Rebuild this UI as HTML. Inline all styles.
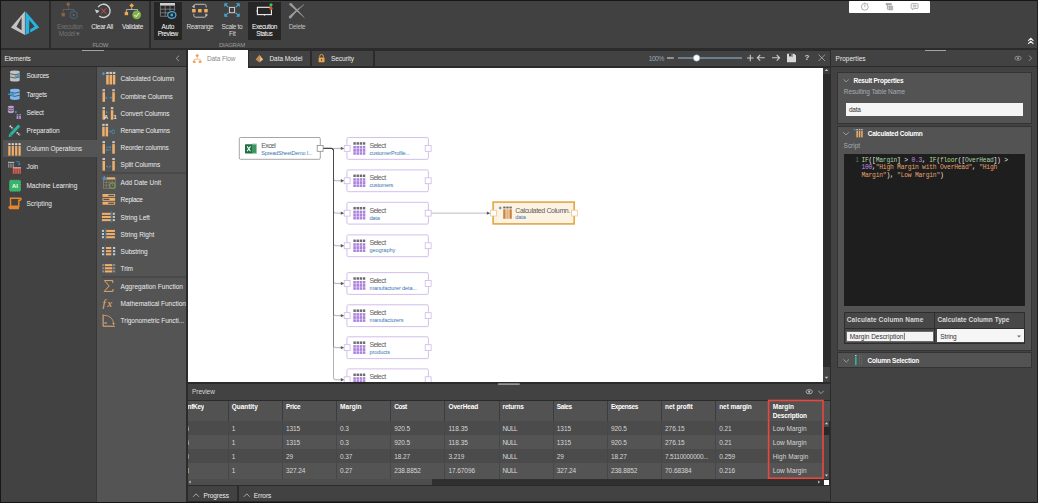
<!DOCTYPE html><html><head><meta charset="utf-8"><title>Data Flow</title><style>
html,body{margin:0;padding:0;}body{width:1038px;height:503px;background:#2b2b2b;position:relative;overflow:hidden;font-family:"Liberation Sans",sans-serif;}
#app div{position:absolute;box-sizing:border-box;}#app span{position:absolute;white-space:pre;line-height:10px;height:10px;}#ov{position:absolute;left:0;top:0;pointer-events:none;}
</style></head><body><div id="app" style="position:absolute;left:0;top:0;width:1038px;height:503px;overflow:hidden">
<div style="left:0px;top:0px;width:1038px;height:1px;background:#161616;"></div>
<div style="left:0px;top:0px;width:0.9px;height:503px;background:#171717;"></div>
<div style="left:0px;top:501.7px;width:1038px;height:1.3px;background:#151515;"></div>
<div style="left:1px;top:1px;width:48px;height:47px;background:#414141;"></div>
<div style="left:51px;top:1px;width:98px;height:47px;background:#414141;"></div>
<div style="left:151px;top:1px;width:887px;height:47px;background:#414141;"></div>
<div style="left:153.5px;top:1.5px;width:28px;height:38px;background:#262626;"></div>
<div style="left:248px;top:1.5px;width:33px;height:38px;background:#262626;"></div>
<div style="left:849px;top:0.8px;width:81px;height:12.3px;background:#ffffff;border-radius:0.8px;"></div>
<div style="left:1px;top:50px;width:185px;height:16.3px;background:#424242;"></div>
<div style="left:188px;top:50px;width:60px;height:18px;background:#ffffff;"></div>
<div style="left:249px;top:50.5px;width:61px;height:15.7px;background:#424242;"></div>
<div style="left:312px;top:50.5px;width:61px;height:15.7px;background:#424242;"></div>
<div style="left:374.5px;top:50.5px;width:455px;height:15.7px;background:#424242;"></div>
<div style="left:831.3px;top:50px;width:207px;height:16.3px;background:#424242;"></div>
<div style="left:82px;top:50px;width:22px;height:1px;background:#a4a4a4;"></div>
<div style="left:924.5px;top:50px;width:21px;height:1px;background:#a4a4a4;"></div>
<div style="left:1px;top:67.3px;width:95.5px;height:434.5px;background:#424242;"></div>
<div style="left:97px;top:67.3px;width:89.2px;height:434.5px;background:#545454;"></div>
<div style="left:96.2px;top:67.3px;width:0.9px;height:434.5px;background:#383838;"></div>
<div style="left:3px;top:140.3px;width:95px;height:16.7px;background:#545454;"></div>
<div style="left:102.2px;top:172.1px;width:84px;height:1.5px;background:#494949;"></div>
<div style="left:102.2px;top:276px;width:84px;height:1.5px;background:#494949;"></div>
<div style="left:188px;top:68px;width:635px;height:314px;background:#ffffff;"></div>
<div style="left:823px;top:68px;width:6.5px;height:314px;background:#2c2c2c;"></div>
<div style="left:823px;top:68px;width:6.5px;height:6px;background:#3d3d3d;"></div>
<div style="left:823px;top:367.2px;width:6.5px;height:14.8px;background:#444444;"></div>
<div style="left:188px;top:383.5px;width:641.5px;height:16.5px;background:#424242;"></div>
<div style="left:188px;top:401px;width:641.5px;height:20px;background:#525252;"></div>
<div style="left:188px;top:421px;width:635.6px;height:14px;background:#4b4b4b;"></div>
<div style="left:188px;top:435px;width:635.6px;height:14px;background:#545454;"></div>
<div style="left:188px;top:449px;width:635.6px;height:14px;background:#4b4b4b;"></div>
<div style="left:188px;top:463px;width:635.6px;height:16px;background:#545454;"></div>
<div style="left:823.6px;top:421px;width:5.9px;height:58px;background:#474747;"></div>
<div style="left:823.6px;top:426.8px;width:5.9px;height:8.2px;background:#282828;"></div>
<div style="left:188px;top:479px;width:244px;height:5.8px;background:#4d4d4d;"></div>
<div style="left:432px;top:479px;width:391.6px;height:5.8px;background:#303030;"></div>
<div style="left:823.8px;top:480px;width:5.5px;height:5px;background:#ffffff;"></div>
<div style="left:188px;top:486.2px;width:48.5px;height:15.2px;background:#424242;"></div>
<div style="left:238.5px;top:486.2px;width:591px;height:15.2px;background:#424242;"></div>
<div style="left:227.7px;top:401px;width:1px;height:20px;background:#3c3c3c;"></div>
<div style="left:227.7px;top:421px;width:1px;height:58px;background:#474747;"></div>
<div style="left:281.8px;top:401px;width:1px;height:20px;background:#3c3c3c;"></div>
<div style="left:281.8px;top:421px;width:1px;height:58px;background:#474747;"></div>
<div style="left:336.0px;top:401px;width:1px;height:20px;background:#3c3c3c;"></div>
<div style="left:336.0px;top:421px;width:1px;height:58px;background:#474747;"></div>
<div style="left:390.2px;top:401px;width:1px;height:20px;background:#3c3c3c;"></div>
<div style="left:390.2px;top:421px;width:1px;height:58px;background:#474747;"></div>
<div style="left:444.4px;top:401px;width:1px;height:20px;background:#3c3c3c;"></div>
<div style="left:444.4px;top:421px;width:1px;height:58px;background:#474747;"></div>
<div style="left:498.5px;top:401px;width:1px;height:20px;background:#3c3c3c;"></div>
<div style="left:498.5px;top:421px;width:1px;height:58px;background:#474747;"></div>
<div style="left:552.7px;top:401px;width:1px;height:20px;background:#3c3c3c;"></div>
<div style="left:552.7px;top:421px;width:1px;height:58px;background:#474747;"></div>
<div style="left:606.8px;top:401px;width:1px;height:20px;background:#3c3c3c;"></div>
<div style="left:606.8px;top:421px;width:1px;height:58px;background:#474747;"></div>
<div style="left:661.0px;top:401px;width:1px;height:20px;background:#3c3c3c;"></div>
<div style="left:661.0px;top:421px;width:1px;height:58px;background:#474747;"></div>
<div style="left:715.1px;top:401px;width:1px;height:20px;background:#3c3c3c;"></div>
<div style="left:715.1px;top:421px;width:1px;height:58px;background:#474747;"></div>
<div style="left:831.3px;top:67.3px;width:207px;height:434.5px;background:#424242;"></div>
<div style="left:837.4px;top:72.2px;width:194.9px;height:52.1px;background:#343434;"></div>
<div style="left:838.4px;top:73.2px;width:192.9px;height:50.0px;background:#535353;"></div>
<div style="left:837.4px;top:126px;width:194.9px;height:225.1px;background:#343434;"></div>
<div style="left:838.4px;top:127px;width:192.9px;height:223px;background:#535353;"></div>
<div style="left:837.4px;top:352.2px;width:194.9px;height:16.200000000000024px;background:#343434;"></div>
<div style="left:838.4px;top:353.2px;width:192.9px;height:14.100000000000023px;background:#535353;"></div>
<div style="left:1037.2px;top:0px;width:0.8px;height:503px;background:#202020;"></div>
<div style="left:845.8px;top:102.6px;width:177.6px;height:13.2px;background:#f5f5f5;"></div>
<div style="left:844px;top:154.2px;width:181.3px;height:151.4px;background:#1e1e1e;"></div>
<div style="left:844.2px;top:312.2px;width:180.7px;height:31.4px;background:#2e2e2e;"></div>
<div style="left:845.2px;top:313.2px;width:88.8px;height:14.6px;background:#474747;"></div>
<div style="left:935px;top:313.2px;width:88.9px;height:14.6px;background:#474747;"></div>
<div style="left:845.2px;top:328.8px;width:88.8px;height:13.8px;background:#474747;"></div>
<div style="left:935px;top:328.8px;width:88.9px;height:13.8px;background:#474747;"></div>
<div style="left:845.6px;top:331.2px;width:88.4px;height:11.2px;background:#f4f4f4;border:1px solid #6a6a6a;"></div>
<div style="left:937.2px;top:329.2px;width:87.3px;height:13px;background:#f6f6f6;"></div>
<svg id="ov" width="1038" height="503" viewBox="0 0 1038 503">
<defs><clipPath id="cv"><rect x="188" y="68" width="635" height="314"/></clipPath></defs>
<g clip-path="url(#cv)">
<path d="M323.2,148.4 H341.5" fill="none" stroke="#484848" stroke-opacity="0.42" stroke-width="1"/>
<path d="M340.8,146.70000000000002 L344.3,148.4 L340.8,150.1 Z" fill="#5a5a5a"/>
<path d="M323.2,148.4 H331.3 Q333.5,148.4 333.5,150.6 V178.55 Q333.5,180.75 335.7,180.75 H341.5" fill="none" stroke="#484848" stroke-opacity="0.42" stroke-width="1"/>
<path d="M340.8,179.05 L344.3,180.75 L340.8,182.45 Z" fill="#5a5a5a"/>
<path d="M323.2,148.4 H331.3 Q333.5,148.4 333.5,150.6 V210.95000000000002 Q333.5,213.15 335.7,213.15 H341.5" fill="none" stroke="#484848" stroke-opacity="0.42" stroke-width="1"/>
<path d="M340.8,211.45000000000002 L344.3,213.15 L340.8,214.85 Z" fill="#5a5a5a"/>
<path d="M323.2,148.4 H331.3 Q333.5,148.4 333.5,150.6 V243.55 Q333.5,245.75 335.7,245.75 H341.5" fill="none" stroke="#484848" stroke-opacity="0.42" stroke-width="1"/>
<path d="M340.8,244.05 L344.3,245.75 L340.8,247.45 Z" fill="#5a5a5a"/>
<path d="M323.2,148.4 H331.3 Q333.5,148.4 333.5,150.6 V281.25 Q333.5,283.45 335.7,283.45 H341.5" fill="none" stroke="#484848" stroke-opacity="0.42" stroke-width="1"/>
<path d="M340.8,281.75 L344.3,283.45 L340.8,285.15 Z" fill="#5a5a5a"/>
<path d="M323.2,148.4 H331.3 Q333.5,148.4 333.5,150.6 V313.45 Q333.5,315.65 335.7,315.65 H341.5" fill="none" stroke="#484848" stroke-opacity="0.42" stroke-width="1"/>
<path d="M340.8,313.95 L344.3,315.65 L340.8,317.34999999999997 Z" fill="#5a5a5a"/>
<path d="M323.2,148.4 H331.3 Q333.5,148.4 333.5,150.6 V345.45 Q333.5,347.65 335.7,347.65 H341.5" fill="none" stroke="#484848" stroke-opacity="0.42" stroke-width="1"/>
<path d="M340.8,345.95 L344.3,347.65 L340.8,349.34999999999997 Z" fill="#5a5a5a"/>
<path d="M323.2,148.4 H331.3 Q333.5,148.4 333.5,150.6 V377.55 Q333.5,379.75 335.7,379.75 H341.5" fill="none" stroke="#484848" stroke-opacity="0.42" stroke-width="1"/>
<path d="M340.8,378.05 L344.3,379.75 L340.8,381.45 Z" fill="#5a5a5a"/>
<path d="M431.3,213.15 H487.5" fill="none" stroke="#bcbcbc" stroke-width="1"/>
<path d="M486.8,211.45000000000002 L490.4,213.15 L486.8,214.85 Z" fill="#5a5a5a"/>
<rect x="239.3" y="137.5" width="81" height="21.8" rx="1.3" fill="#fff" stroke="#9c9c9c" stroke-width="0.9"/>
<rect x="317.2" y="145.4" width="5.9" height="5.9" fill="#fff" stroke="#8a8a8a" stroke-width="0.8"/>
<rect x="251.5" y="143.6" width="5.4" height="10.3" rx="0.6" fill="#9fd0b0"/><rect x="252.8" y="144.6" width="3.4" height="8.3" fill="#3d9561"/>
<rect x="245" y="144.2" width="7.6" height="9.2" rx="0.6" fill="#1d6f42"/><path d="M247.1,146.4 L250.5,151.2 M250.5,146.4 L247.1,151.2" stroke="#fff" stroke-width="1.1"/>
<rect x="346.9" y="137.55" width="81.5" height="21.8" rx="1.5" fill="#fff" stroke="#cdb8ea" stroke-width="0.9"/>
<rect x="344.2" y="145.45" width="5.9" height="5.9" fill="#fff" stroke="#cdb8ea" stroke-width="0.8"/>
<rect x="425.2" y="145.45" width="5.9" height="5.9" fill="#fff" stroke="#cdb8ea" stroke-width="0.8"/>
<rect x="353.40" y="142.2" width="2.4" height="2.5" fill="#6c6c6c"/>
<rect x="353.40" y="145.95" width="2.4" height="8.7" fill="#d6c2f0"/>
<rect x="353.40" y="145.95" width="2.4" height="2.3" fill="#ad84dc"/>
<rect x="353.40" y="148.95" width="2.4" height="2.7" fill="#ad84dc"/>
<rect x="353.40" y="152.35" width="2.4" height="2.3" fill="#ad84dc"/>
<rect x="356.55" y="142.2" width="2.4" height="2.5" fill="#6c6c6c"/>
<rect x="356.55" y="145.95" width="2.4" height="8.7" fill="#d6c2f0"/>
<rect x="356.55" y="145.95" width="2.4" height="2.3" fill="#ad84dc"/>
<rect x="356.55" y="148.95" width="2.4" height="2.7" fill="#ad84dc"/>
<rect x="356.55" y="152.35" width="2.4" height="2.3" fill="#ad84dc"/>
<rect x="359.70" y="142.2" width="2.4" height="2.5" fill="#6c6c6c"/>
<rect x="359.70" y="145.95" width="2.4" height="8.7" fill="#d6c2f0"/>
<rect x="359.70" y="145.95" width="2.4" height="2.3" fill="#ad84dc"/>
<rect x="359.70" y="148.95" width="2.4" height="2.7" fill="#ad84dc"/>
<rect x="359.70" y="152.35" width="2.4" height="2.3" fill="#ad84dc"/>
<rect x="362.85" y="142.2" width="2.4" height="2.5" fill="#6c6c6c"/>
<rect x="362.85" y="145.95" width="2.4" height="8.7" fill="#d6c2f0"/>
<rect x="362.85" y="145.95" width="2.4" height="2.3" fill="#ad84dc"/>
<rect x="362.85" y="148.95" width="2.4" height="2.7" fill="#ad84dc"/>
<rect x="362.85" y="152.35" width="2.4" height="2.3" fill="#ad84dc"/>
<rect x="346.9" y="169.9" width="81.5" height="21.8" rx="1.5" fill="#fff" stroke="#cdb8ea" stroke-width="0.9"/>
<rect x="344.2" y="177.79999999999998" width="5.9" height="5.9" fill="#fff" stroke="#cdb8ea" stroke-width="0.8"/>
<rect x="425.2" y="177.79999999999998" width="5.9" height="5.9" fill="#fff" stroke="#cdb8ea" stroke-width="0.8"/>
<rect x="353.40" y="174.54999999999998" width="2.4" height="2.5" fill="#6c6c6c"/>
<rect x="353.40" y="178.29999999999998" width="2.4" height="8.7" fill="#d6c2f0"/>
<rect x="353.40" y="178.29999999999998" width="2.4" height="2.3" fill="#ad84dc"/>
<rect x="353.40" y="181.29999999999998" width="2.4" height="2.7" fill="#ad84dc"/>
<rect x="353.40" y="184.7" width="2.4" height="2.3" fill="#ad84dc"/>
<rect x="356.55" y="174.54999999999998" width="2.4" height="2.5" fill="#6c6c6c"/>
<rect x="356.55" y="178.29999999999998" width="2.4" height="8.7" fill="#d6c2f0"/>
<rect x="356.55" y="178.29999999999998" width="2.4" height="2.3" fill="#ad84dc"/>
<rect x="356.55" y="181.29999999999998" width="2.4" height="2.7" fill="#ad84dc"/>
<rect x="356.55" y="184.7" width="2.4" height="2.3" fill="#ad84dc"/>
<rect x="359.70" y="174.54999999999998" width="2.4" height="2.5" fill="#6c6c6c"/>
<rect x="359.70" y="178.29999999999998" width="2.4" height="8.7" fill="#d6c2f0"/>
<rect x="359.70" y="178.29999999999998" width="2.4" height="2.3" fill="#ad84dc"/>
<rect x="359.70" y="181.29999999999998" width="2.4" height="2.7" fill="#ad84dc"/>
<rect x="359.70" y="184.7" width="2.4" height="2.3" fill="#ad84dc"/>
<rect x="362.85" y="174.54999999999998" width="2.4" height="2.5" fill="#6c6c6c"/>
<rect x="362.85" y="178.29999999999998" width="2.4" height="8.7" fill="#d6c2f0"/>
<rect x="362.85" y="178.29999999999998" width="2.4" height="2.3" fill="#ad84dc"/>
<rect x="362.85" y="181.29999999999998" width="2.4" height="2.7" fill="#ad84dc"/>
<rect x="362.85" y="184.7" width="2.4" height="2.3" fill="#ad84dc"/>
<rect x="346.9" y="202.3" width="81.5" height="21.8" rx="1.5" fill="#fff" stroke="#cdb8ea" stroke-width="0.9"/>
<rect x="344.2" y="210.2" width="5.9" height="5.9" fill="#fff" stroke="#cdb8ea" stroke-width="0.8"/>
<rect x="425.2" y="210.2" width="5.9" height="5.9" fill="#fff" stroke="#cdb8ea" stroke-width="0.8"/>
<rect x="353.40" y="206.95" width="2.4" height="2.5" fill="#6c6c6c"/>
<rect x="353.40" y="210.7" width="2.4" height="8.7" fill="#d6c2f0"/>
<rect x="353.40" y="210.7" width="2.4" height="2.3" fill="#ad84dc"/>
<rect x="353.40" y="213.7" width="2.4" height="2.7" fill="#ad84dc"/>
<rect x="353.40" y="217.1" width="2.4" height="2.3" fill="#ad84dc"/>
<rect x="356.55" y="206.95" width="2.4" height="2.5" fill="#6c6c6c"/>
<rect x="356.55" y="210.7" width="2.4" height="8.7" fill="#d6c2f0"/>
<rect x="356.55" y="210.7" width="2.4" height="2.3" fill="#ad84dc"/>
<rect x="356.55" y="213.7" width="2.4" height="2.7" fill="#ad84dc"/>
<rect x="356.55" y="217.1" width="2.4" height="2.3" fill="#ad84dc"/>
<rect x="359.70" y="206.95" width="2.4" height="2.5" fill="#6c6c6c"/>
<rect x="359.70" y="210.7" width="2.4" height="8.7" fill="#d6c2f0"/>
<rect x="359.70" y="210.7" width="2.4" height="2.3" fill="#ad84dc"/>
<rect x="359.70" y="213.7" width="2.4" height="2.7" fill="#ad84dc"/>
<rect x="359.70" y="217.1" width="2.4" height="2.3" fill="#ad84dc"/>
<rect x="362.85" y="206.95" width="2.4" height="2.5" fill="#6c6c6c"/>
<rect x="362.85" y="210.7" width="2.4" height="8.7" fill="#d6c2f0"/>
<rect x="362.85" y="210.7" width="2.4" height="2.3" fill="#ad84dc"/>
<rect x="362.85" y="213.7" width="2.4" height="2.7" fill="#ad84dc"/>
<rect x="362.85" y="217.1" width="2.4" height="2.3" fill="#ad84dc"/>
<rect x="346.9" y="234.9" width="81.5" height="21.8" rx="1.5" fill="#fff" stroke="#cdb8ea" stroke-width="0.9"/>
<rect x="344.2" y="242.79999999999998" width="5.9" height="5.9" fill="#fff" stroke="#cdb8ea" stroke-width="0.8"/>
<rect x="425.2" y="242.79999999999998" width="5.9" height="5.9" fill="#fff" stroke="#cdb8ea" stroke-width="0.8"/>
<rect x="353.40" y="239.54999999999998" width="2.4" height="2.5" fill="#6c6c6c"/>
<rect x="353.40" y="243.29999999999998" width="2.4" height="8.7" fill="#d6c2f0"/>
<rect x="353.40" y="243.29999999999998" width="2.4" height="2.3" fill="#ad84dc"/>
<rect x="353.40" y="246.29999999999998" width="2.4" height="2.7" fill="#ad84dc"/>
<rect x="353.40" y="249.7" width="2.4" height="2.3" fill="#ad84dc"/>
<rect x="356.55" y="239.54999999999998" width="2.4" height="2.5" fill="#6c6c6c"/>
<rect x="356.55" y="243.29999999999998" width="2.4" height="8.7" fill="#d6c2f0"/>
<rect x="356.55" y="243.29999999999998" width="2.4" height="2.3" fill="#ad84dc"/>
<rect x="356.55" y="246.29999999999998" width="2.4" height="2.7" fill="#ad84dc"/>
<rect x="356.55" y="249.7" width="2.4" height="2.3" fill="#ad84dc"/>
<rect x="359.70" y="239.54999999999998" width="2.4" height="2.5" fill="#6c6c6c"/>
<rect x="359.70" y="243.29999999999998" width="2.4" height="8.7" fill="#d6c2f0"/>
<rect x="359.70" y="243.29999999999998" width="2.4" height="2.3" fill="#ad84dc"/>
<rect x="359.70" y="246.29999999999998" width="2.4" height="2.7" fill="#ad84dc"/>
<rect x="359.70" y="249.7" width="2.4" height="2.3" fill="#ad84dc"/>
<rect x="362.85" y="239.54999999999998" width="2.4" height="2.5" fill="#6c6c6c"/>
<rect x="362.85" y="243.29999999999998" width="2.4" height="8.7" fill="#d6c2f0"/>
<rect x="362.85" y="243.29999999999998" width="2.4" height="2.3" fill="#ad84dc"/>
<rect x="362.85" y="246.29999999999998" width="2.4" height="2.7" fill="#ad84dc"/>
<rect x="362.85" y="249.7" width="2.4" height="2.3" fill="#ad84dc"/>
<rect x="346.9" y="272.6" width="81.5" height="21.8" rx="1.5" fill="#fff" stroke="#cdb8ea" stroke-width="0.9"/>
<rect x="344.2" y="280.5" width="5.9" height="5.9" fill="#fff" stroke="#cdb8ea" stroke-width="0.8"/>
<rect x="425.2" y="280.5" width="5.9" height="5.9" fill="#fff" stroke="#cdb8ea" stroke-width="0.8"/>
<rect x="353.40" y="277.25" width="2.4" height="2.5" fill="#6c6c6c"/>
<rect x="353.40" y="281.0" width="2.4" height="8.7" fill="#d6c2f0"/>
<rect x="353.40" y="281.0" width="2.4" height="2.3" fill="#ad84dc"/>
<rect x="353.40" y="284.0" width="2.4" height="2.7" fill="#ad84dc"/>
<rect x="353.40" y="287.40000000000003" width="2.4" height="2.3" fill="#ad84dc"/>
<rect x="356.55" y="277.25" width="2.4" height="2.5" fill="#6c6c6c"/>
<rect x="356.55" y="281.0" width="2.4" height="8.7" fill="#d6c2f0"/>
<rect x="356.55" y="281.0" width="2.4" height="2.3" fill="#ad84dc"/>
<rect x="356.55" y="284.0" width="2.4" height="2.7" fill="#ad84dc"/>
<rect x="356.55" y="287.40000000000003" width="2.4" height="2.3" fill="#ad84dc"/>
<rect x="359.70" y="277.25" width="2.4" height="2.5" fill="#6c6c6c"/>
<rect x="359.70" y="281.0" width="2.4" height="8.7" fill="#d6c2f0"/>
<rect x="359.70" y="281.0" width="2.4" height="2.3" fill="#ad84dc"/>
<rect x="359.70" y="284.0" width="2.4" height="2.7" fill="#ad84dc"/>
<rect x="359.70" y="287.40000000000003" width="2.4" height="2.3" fill="#ad84dc"/>
<rect x="362.85" y="277.25" width="2.4" height="2.5" fill="#6c6c6c"/>
<rect x="362.85" y="281.0" width="2.4" height="8.7" fill="#d6c2f0"/>
<rect x="362.85" y="281.0" width="2.4" height="2.3" fill="#ad84dc"/>
<rect x="362.85" y="284.0" width="2.4" height="2.7" fill="#ad84dc"/>
<rect x="362.85" y="287.40000000000003" width="2.4" height="2.3" fill="#ad84dc"/>
<rect x="346.9" y="304.8" width="81.5" height="21.8" rx="1.5" fill="#fff" stroke="#cdb8ea" stroke-width="0.9"/>
<rect x="344.2" y="312.7" width="5.9" height="5.9" fill="#fff" stroke="#cdb8ea" stroke-width="0.8"/>
<rect x="425.2" y="312.7" width="5.9" height="5.9" fill="#fff" stroke="#cdb8ea" stroke-width="0.8"/>
<rect x="353.40" y="309.45" width="2.4" height="2.5" fill="#6c6c6c"/>
<rect x="353.40" y="313.2" width="2.4" height="8.7" fill="#d6c2f0"/>
<rect x="353.40" y="313.2" width="2.4" height="2.3" fill="#ad84dc"/>
<rect x="353.40" y="316.2" width="2.4" height="2.7" fill="#ad84dc"/>
<rect x="353.40" y="319.6" width="2.4" height="2.3" fill="#ad84dc"/>
<rect x="356.55" y="309.45" width="2.4" height="2.5" fill="#6c6c6c"/>
<rect x="356.55" y="313.2" width="2.4" height="8.7" fill="#d6c2f0"/>
<rect x="356.55" y="313.2" width="2.4" height="2.3" fill="#ad84dc"/>
<rect x="356.55" y="316.2" width="2.4" height="2.7" fill="#ad84dc"/>
<rect x="356.55" y="319.6" width="2.4" height="2.3" fill="#ad84dc"/>
<rect x="359.70" y="309.45" width="2.4" height="2.5" fill="#6c6c6c"/>
<rect x="359.70" y="313.2" width="2.4" height="8.7" fill="#d6c2f0"/>
<rect x="359.70" y="313.2" width="2.4" height="2.3" fill="#ad84dc"/>
<rect x="359.70" y="316.2" width="2.4" height="2.7" fill="#ad84dc"/>
<rect x="359.70" y="319.6" width="2.4" height="2.3" fill="#ad84dc"/>
<rect x="362.85" y="309.45" width="2.4" height="2.5" fill="#6c6c6c"/>
<rect x="362.85" y="313.2" width="2.4" height="8.7" fill="#d6c2f0"/>
<rect x="362.85" y="313.2" width="2.4" height="2.3" fill="#ad84dc"/>
<rect x="362.85" y="316.2" width="2.4" height="2.7" fill="#ad84dc"/>
<rect x="362.85" y="319.6" width="2.4" height="2.3" fill="#ad84dc"/>
<rect x="346.9" y="336.8" width="81.5" height="21.8" rx="1.5" fill="#fff" stroke="#cdb8ea" stroke-width="0.9"/>
<rect x="344.2" y="344.7" width="5.9" height="5.9" fill="#fff" stroke="#cdb8ea" stroke-width="0.8"/>
<rect x="425.2" y="344.7" width="5.9" height="5.9" fill="#fff" stroke="#cdb8ea" stroke-width="0.8"/>
<rect x="353.40" y="341.45" width="2.4" height="2.5" fill="#6c6c6c"/>
<rect x="353.40" y="345.2" width="2.4" height="8.7" fill="#d6c2f0"/>
<rect x="353.40" y="345.2" width="2.4" height="2.3" fill="#ad84dc"/>
<rect x="353.40" y="348.2" width="2.4" height="2.7" fill="#ad84dc"/>
<rect x="353.40" y="351.6" width="2.4" height="2.3" fill="#ad84dc"/>
<rect x="356.55" y="341.45" width="2.4" height="2.5" fill="#6c6c6c"/>
<rect x="356.55" y="345.2" width="2.4" height="8.7" fill="#d6c2f0"/>
<rect x="356.55" y="345.2" width="2.4" height="2.3" fill="#ad84dc"/>
<rect x="356.55" y="348.2" width="2.4" height="2.7" fill="#ad84dc"/>
<rect x="356.55" y="351.6" width="2.4" height="2.3" fill="#ad84dc"/>
<rect x="359.70" y="341.45" width="2.4" height="2.5" fill="#6c6c6c"/>
<rect x="359.70" y="345.2" width="2.4" height="8.7" fill="#d6c2f0"/>
<rect x="359.70" y="345.2" width="2.4" height="2.3" fill="#ad84dc"/>
<rect x="359.70" y="348.2" width="2.4" height="2.7" fill="#ad84dc"/>
<rect x="359.70" y="351.6" width="2.4" height="2.3" fill="#ad84dc"/>
<rect x="362.85" y="341.45" width="2.4" height="2.5" fill="#6c6c6c"/>
<rect x="362.85" y="345.2" width="2.4" height="8.7" fill="#d6c2f0"/>
<rect x="362.85" y="345.2" width="2.4" height="2.3" fill="#ad84dc"/>
<rect x="362.85" y="348.2" width="2.4" height="2.7" fill="#ad84dc"/>
<rect x="362.85" y="351.6" width="2.4" height="2.3" fill="#ad84dc"/>
<rect x="346.9" y="368.90000000000003" width="81.5" height="21.8" rx="1.5" fill="#fff" stroke="#cdb8ea" stroke-width="0.9"/>
<rect x="344.2" y="376.8" width="5.9" height="5.9" fill="#fff" stroke="#cdb8ea" stroke-width="0.8"/>
<rect x="425.2" y="376.8" width="5.9" height="5.9" fill="#fff" stroke="#cdb8ea" stroke-width="0.8"/>
<rect x="353.40" y="373.55" width="2.4" height="2.5" fill="#6c6c6c"/>
<rect x="353.40" y="377.3" width="2.4" height="8.7" fill="#d6c2f0"/>
<rect x="353.40" y="377.3" width="2.4" height="2.3" fill="#ad84dc"/>
<rect x="353.40" y="380.3" width="2.4" height="2.7" fill="#ad84dc"/>
<rect x="353.40" y="383.70000000000005" width="2.4" height="2.3" fill="#ad84dc"/>
<rect x="356.55" y="373.55" width="2.4" height="2.5" fill="#6c6c6c"/>
<rect x="356.55" y="377.3" width="2.4" height="8.7" fill="#d6c2f0"/>
<rect x="356.55" y="377.3" width="2.4" height="2.3" fill="#ad84dc"/>
<rect x="356.55" y="380.3" width="2.4" height="2.7" fill="#ad84dc"/>
<rect x="356.55" y="383.70000000000005" width="2.4" height="2.3" fill="#ad84dc"/>
<rect x="359.70" y="373.55" width="2.4" height="2.5" fill="#6c6c6c"/>
<rect x="359.70" y="377.3" width="2.4" height="8.7" fill="#d6c2f0"/>
<rect x="359.70" y="377.3" width="2.4" height="2.3" fill="#ad84dc"/>
<rect x="359.70" y="380.3" width="2.4" height="2.7" fill="#ad84dc"/>
<rect x="359.70" y="383.70000000000005" width="2.4" height="2.3" fill="#ad84dc"/>
<rect x="362.85" y="373.55" width="2.4" height="2.5" fill="#6c6c6c"/>
<rect x="362.85" y="377.3" width="2.4" height="8.7" fill="#d6c2f0"/>
<rect x="362.85" y="377.3" width="2.4" height="2.3" fill="#ad84dc"/>
<rect x="362.85" y="380.3" width="2.4" height="2.7" fill="#ad84dc"/>
<rect x="362.85" y="383.70000000000005" width="2.4" height="2.3" fill="#ad84dc"/>
<rect x="493.1" y="202.1" width="81.1" height="21.8" fill="#fdf3e2" stroke="#e2a646" stroke-width="1.6"/>
<rect x="490.6" y="210.2" width="5.8" height="5.8" fill="#fff" stroke="#ecc98f" stroke-width="0.8"/>
<rect x="571.5" y="210.2" width="5.8" height="5.8" fill="#fff" stroke="#ecc98f" stroke-width="0.8"/>
<path d="M498.8,208 H501.6 M500.2,206.6 V209.4" stroke="#2e7fc1" stroke-width="0.9"/>
<rect x="503.20" y="206.6" width="2.4" height="1.8" fill="#6a6a6a"/>
<rect x="503.20" y="209.3" width="2.4" height="9.5" fill="#c98545"/>
<rect x="506.30" y="206.6" width="2.4" height="1.8" fill="#6a6a6a"/>
<rect x="506.30" y="209.3" width="2.4" height="9.5" fill="#dfae7c"/>
<rect x="509.40" y="206.6" width="2.4" height="1.8" fill="#6a6a6a"/>
<rect x="509.40" y="209.3" width="2.4" height="9.5" fill="#c98545"/>
</g>
<path fill-rule="evenodd" fill="#c4c4c4" d="M10.9,27.5 L24.9,11.3 L24.9,34.9 Z M16.4,26.7 L21.6,30.2 L21.6,17.2 Z"/>
<path fill="#27b3df" d="M25.4,11.3 L39.3,27.5 L30.2,32.6 L30.2,29.6 L34.6,26.6 L29.2,20 L29.2,33.2 L25.4,34.9 Z"/>
<g opacity="0.42"><path d="M68.5,6.5 V9.5 M63.2,12.5 V9.5 H74 V11" stroke="#9a9a9a" stroke-width="0.8" fill="none"/><rect x="66.6" y="2.6" width="3.2" height="3.2" transform="rotate(45 68.2 4.2)" fill="#e09a50"/><rect x="61.5" y="13" width="3.4" height="3.4" fill="#e09a50"/><circle cx="73.7" cy="14.9" r="3.5" fill="none" stroke="#3f8fc0" stroke-width="1.1"/><path d="M73.7,10.6 V11.6 M73.7,18.2 V19.2 M70,12.8 L70.8,13.3 M76.6,16.5 L77.4,17 M70,17 L70.8,16.5 M76.6,13.3 L77.4,12.8" stroke="#3f8fc0" stroke-width="1.1"/><path d="M72.8,13.4 L75.3,14.9 L72.8,16.4 Z" fill="#e09a50"/></g>
<path d="M98.1,7.1 A6.6,6.6 0 1 1 99.2,15.9" fill="none" stroke="#d4d4d4" stroke-width="1.35"/>
<path d="M94.6,9.6 L99.6,10.8 L96.8,13.6 Z" fill="#d0d0d0"/>
<path d="M101.1,8.4 L106.2,13.6 M106.2,8.4 L101.1,13.6" stroke="#d9534f" stroke-width="1" />
<path d="M131.7,7.4 V9.5 M126.4,12 V9.5 H137.6 V11" stroke="#c8c8c8" stroke-width="0.8" fill="none"/>
<rect x="130.1" y="3.9" width="3.2" height="3.2" transform="rotate(45 131.7 5.5)" fill="#f0a848"/>
<rect x="124.7" y="11.9" width="3.4" height="3.3" fill="#f0a848"/>
<circle cx="136.7" cy="14.8" r="4.4" fill="#7fb347"/><path d="M134.4,14.9 L136.1,16.7 L139.2,12.9" fill="none" stroke="#fff" stroke-width="1"/>
<rect x="160" y="3" width="15" height="2.6" fill="#cfcfcf"/>
<path d="M160.4,5.6 V16.3 H171 M165.2,5.6 V16.3 M170,5.6 V12 M174.6,5.6 V11 M160.4,9.2 H174.6 M160.4,12.8 H168" stroke="#a4a4a4" stroke-width="0.6" fill="none"/>
<circle cx="171.8" cy="15" r="4.6" fill="#262626"/><ellipse cx="171.8" cy="15" rx="4.1" ry="3.4" fill="none" stroke="#4aa8d8" stroke-width="1.3"/><circle cx="171.8" cy="15" r="1.4" fill="#4aa8d8"/>
<rect x="192.1" y="9" width="3.5" height="3.4" fill="#f0b060"/>
<rect x="198.1" y="9" width="3.5" height="3.4" fill="#f0b060"/>
<rect x="204.2" y="9" width="3.5" height="3.4" fill="#f0b060"/>
<path d="M193.8,7.5 V6 Q193.8,4.3 195.5,4.3 H204.5 Q206.2,4.3 206.2,6 V7.5 M206.2,13.8 V15.5 Q206.2,17.2 204.5,17.2 H195.5 Q193.8,17.2 193.8,15.5 V13.8" fill="none" stroke="#bcbcbc" stroke-width="1"/>
<path d="M191.8,6.6 L194.6,5 L194.6,8.2 Z M208.2,15 L205.4,13.4 L205.4,16.6 Z" fill="#bcbcbc"/>
<rect x="229.4" y="7.4" width="5.2" height="5.3" fill="none" stroke="#d0d0d0" stroke-width="1"/>
<path d="M224.3,3.3 L228.0,3.3 L224.3,7.0 Z" fill="#4aa8d8"/><path d="M225.10000000000002,4.1 L228.20000000000002,7.199999999999999" stroke="#4aa8d8" stroke-width="1.2"/>
<path d="M239.7,3.3 L236.0,3.3 L239.7,7.0 Z" fill="#4aa8d8"/><path d="M238.89999999999998,4.1 L235.79999999999998,7.199999999999999" stroke="#4aa8d8" stroke-width="1.2"/>
<path d="M224.3,16.7 L228.0,16.7 L224.3,13.0 Z" fill="#4aa8d8"/><path d="M225.10000000000002,15.899999999999999 L228.20000000000002,12.799999999999999" stroke="#4aa8d8" stroke-width="1.2"/>
<path d="M239.7,16.7 L236.0,16.7 L239.7,13.0 Z" fill="#4aa8d8"/><path d="M238.89999999999998,15.899999999999999 L235.79999999999998,12.799999999999999" stroke="#4aa8d8" stroke-width="1.2"/>
<rect x="257.4" y="7.3" width="14" height="7.3" fill="none" stroke="#f2f2f2" stroke-width="1.1"/>
<path d="M256.3,11 H257.4 M264.4,14.6 V15.8" stroke="#f2f2f2" stroke-width="0.8"/>
<circle cx="271" cy="4.8" r="1.6" fill="#2fd04a"/><circle cx="271" cy="8.3" r="1.6" fill="#e8432e"/>
<path d="M289,4.6 Q289.4,2.6 291.2,3 Q297,9 304.4,17.4 Q297,12 289,4.6 Z" fill="#9c9c9c"/><path d="M288.8,16.6 Q288.8,18.8 290.8,18.4 Q296,11 303.9,4.5 Q296,9.5 288.8,16.6 Z" fill="#9c9c9c"/><path d="M290.5,4 L304.2,17.5 M290,17.4 L303.8,4.7" stroke="#9c9c9c" stroke-width="0.7" stroke-linecap="round"/>
<circle cx="864.8" cy="6.8" r="3.4" fill="none" stroke="#8e8e8e" stroke-width="0.7"/><path d="M864.8,3.4 V2.6 M867.4,4 L868.1,3.3 M864.8,7.2 V4.6" stroke="#8e8e8e" stroke-width="0.7"/>
<path d="M886,3.4 H891.4 V4.8 H886 Z" fill="#a8a8a8" stroke="#8e8e8e" stroke-width="0.5"/><path d="M887.4,4.8 V9.2 H889 M887.4,6.8 H889" fill="none" stroke="#8e8e8e" stroke-width="0.7"/><path d="M889,6 H892.8 V7.6 H889 Z M889,8.4 H892.8 V10 H889 Z" fill="#c0c0c0" stroke="#8e8e8e" stroke-width="0.5"/>
<path d="M912,3.6 H917.2 Q918,3.6 918,4.4 V7.8 Q918,8.6 917.2,8.6 H913.6 L912.4,9.8 V8.6 H912 Q911.2,8.6 911.2,7.8 V4.4 Q911.2,3.6 912,3.6 Z M912.8,5.4 H916.4 M912.8,6.9 H916.4" fill="none" stroke="#8e8e8e" stroke-width="0.7"/>
<path d="M1028.2,40.8 L1030.8,38.4 L1033.4,40.8 M1028.2,43.8 L1030.8,41.4 L1033.4,43.8" fill="none" stroke="#f0f0f0" stroke-width="1.15"/>
<path d="M176.2,58.4 L179,55.7 M176.2,58.4 L179,61.1" stroke="#b0b0b0" stroke-width="0.8" fill="none"/>
<path d="M197.2,57.4 V59.2 M194.3,61 V59.2 H200.2 V61" stroke="#e8a058" stroke-width="0.6" fill="none"/>
<rect x="195.8" y="54.4" width="2.6" height="2.6" transform="rotate(45 197.2 55.8)" fill="#eaa25c"/><rect x="192.9" y="60.7" width="2.7" height="2.2" fill="#eaa25c"/><rect x="198.8" y="60.7" width="2.7" height="2.2" fill="#eaa25c"/>
<path d="M259.4,54.8 L263.2,59.4 L259.4,62.6 Z" fill="#ecba86"/><path d="M259.4,54.8 L255.6,59.4 L259.4,62.6 Z" fill="#c48c54"/>
<path d="M319.7,57.6 V56.3 A1.85,1.85 0 0 1 323.4,56.3 V57.6" fill="none" stroke="#e8a552" stroke-width="0.9"/><rect x="318.6" y="57.5" width="5.9" height="4.8" rx="0.5" fill="#e8a552"/><rect x="321.1" y="59.1" width="0.9" height="1.7" fill="#424242"/>
<path d="M667,58 H673.8" stroke="#b5b5b5" stroke-width="1.4"/>
<path d="M678,58 H742" stroke="#7f93a6" stroke-width="1.3"/>
<circle cx="696.6" cy="58" r="3.2" fill="#fff" stroke="#8aa0b5" stroke-width="0.7"/>
<path d="M747,58 H753.6 M750.3,54.7 V61.3" stroke="#c8c8c8" stroke-width="1.1"/>
<path d="M757.3,57.8 H764.8 M760.2,55 L757.3,57.8 L760.2,60.6" stroke="#c8c8c8" stroke-width="1.1" fill="none"/>
<path d="M772,57.8 H779.6 M776.7,55 L779.6,57.8 L776.7,60.6" stroke="#c8c8c8" stroke-width="1.1" fill="none"/>
<path d="M787,53.8 H794.2 L796,55.6 V62.2 H787 Z" fill="#d8d8d8"/><rect x="789" y="53.8" width="4" height="2.6" fill="#424242"/><rect x="791.6" y="54.1" width="1" height="1.9" fill="#d8d8d8"/>
<path d="M818.6,54.6 L825,61 M825,54.6 L818.6,61" stroke="#b0b0b0" stroke-width="0.8"/>
<ellipse cx="1018" cy="58.2" rx="3.2" ry="2" fill="none" stroke="#a8a8a8" stroke-width="0.7"/><circle cx="1018" cy="58.2" r="1" fill="#a8a8a8"/>
<path d="M1029,55.6 L1031.6,58.2 L1029,60.8" fill="none" stroke="#a8a8a8" stroke-width="0.8"/>
<path d="M824.7,71 L826.5,69 L828.3,71 Z" fill="#c8c8c8"/><path d="M824.7,376.8 L826.5,378.8 L828.3,376.8 Z" fill="#c8c8c8"/>
<ellipse cx="809.2" cy="391.7" rx="3.2" ry="2.1" fill="none" stroke="#c0c0c0" stroke-width="0.8"/><circle cx="809.2" cy="391.7" r="1.1" fill="#c0c0c0"/>
<path d="M818.2,390.8 L821,393.6 L823.8,390.8" fill="none" stroke="#b5b5b5" stroke-width="0.8"/>
<path d="M824.8,424.3 L826.5,422.3 L828.2,424.3 Z" fill="#d0d0d0"/><path d="M824.8,474.6 L826.5,476.6 L828.2,474.6 Z" fill="#d0d0d0"/>
<path d="M190.6,480.6 L188.8,482 L190.6,483.4 Z" fill="#d0d0d0"/><path d="M818.2,480.6 L820,482 L818.2,483.4 Z" fill="#d0d0d0"/>
<path d="M193.2,496.8 L196.1,493.8 L199,496.8 M243.9,496.8 L246.8,493.8 L249.7,496.8" fill="none" stroke="#c0c0c0" stroke-width="0.8"/>
<rect x="498" y="383.4" width="21.7" height="1.4" fill="#a8a8a8"/>
<rect x="768.6" y="400.5" width="54.4" height="77.7" fill="none" stroke="#ea473e" stroke-width="1.6"/>
<rect x="10.1" y="71.60000000000001" width="9.5" height="8.799999999999999" fill="#c2c2c2"/><ellipse cx="14.85" cy="71.80000000000001" rx="4.75" ry="1.4" fill="#c2c2c2"/><ellipse cx="14.85" cy="80.2" rx="4.75" ry="1.4" fill="#c2c2c2"/><path d="M10.1,73.7 Q14.85,76.00000000000001 19.6,73.7" fill="none" stroke="#424242" stroke-width="0.8"/><path d="M10.1,76.9 Q14.85,79.20000000000002 19.6,76.9" fill="none" stroke="#424242" stroke-width="0.8"/>
<path d="M14.6,76.2 H18" stroke="#3a9ac8" stroke-width="1.3"/><path d="M17.2,74.1 L20.4,76.2 L17.2,78.3 Z" fill="#3a9ac8"/>
<rect x="10.1" y="90.0" width="9.5" height="8.7" fill="#7db9ee"/><ellipse cx="14.85" cy="90.2" rx="4.75" ry="1.4" fill="#7db9ee"/><ellipse cx="14.85" cy="98.49999999999999" rx="4.75" ry="1.4" fill="#7db9ee"/><path d="M10.1,92.06666666666666 Q14.85,94.36666666666667 19.6,92.06666666666666" fill="none" stroke="#424242" stroke-width="0.8"/><path d="M10.1,95.23333333333332 Q14.85,97.53333333333333 19.6,95.23333333333332" fill="none" stroke="#424242" stroke-width="0.8"/>
<path d="M7.9,94.3 H12" stroke="#3a9ac8" stroke-width="1.3"/><path d="M11.4,92.2 L14.6,94.3 L11.4,96.4 Z" fill="#3a9ac8"/>
<rect x="7.9" y="107.0" width="6.1" height="5.0" fill="#be9ecf"/><ellipse cx="10.95" cy="107.2" rx="3.05" ry="1.4" fill="#be9ecf"/><ellipse cx="10.95" cy="111.8" rx="3.05" ry="1.4" fill="#be9ecf"/><path d="M7.9,107.83333333333333 Q10.95,110.13333333333334 14.0,107.83333333333333" fill="none" stroke="#424242" stroke-width="0.8"/><path d="M7.9,109.76666666666665 Q10.95,112.06666666666666 14.0,109.76666666666665" fill="none" stroke="#424242" stroke-width="0.8"/>
<path d="M15.2,110.8 L17.4,112.1 L15.2,113.4 Z" fill="#3f9ad6"/>
<rect x="16.6" y="114.2" width="1.8" height="1.2" fill="#9a9a9a"/><rect x="19.2" y="114.2" width="1.8" height="1.2" fill="#9a9a9a"/><rect x="16.6" y="115.8" width="1.8" height="3.2" fill="#b58ad0"/><rect x="19.2" y="115.8" width="1.8" height="3.2" fill="#b58ad0"/>
<path d="M10.8,134.6 L19.2,125.6" stroke="#2bb5a0" stroke-width="2.9" stroke-linecap="butt"/><path d="M8.6,137 L9.2,133.4 L12.2,136.2 Z" fill="#2bb5a0"/>
<path d="M9.8,125.8 L13,128.8 M16.8,132.4 L20,135.4" stroke="#d8d8d8" stroke-width="1.9" stroke-dasharray="1.3 0.7"/>
<rect x="8.30" y="143.2" width="2.2" height="1.9" fill="#dcdcdc"/><rect x="8.30" y="146" width="2.2" height="9.7" fill="#f0b06c"/>
<rect x="11.70" y="143.2" width="2.2" height="1.9" fill="#dcdcdc"/><rect x="11.70" y="146" width="2.2" height="9.7" fill="#f0b06c"/>
<rect x="15.10" y="143.2" width="2.2" height="1.9" fill="#dcdcdc"/><rect x="15.10" y="146" width="2.2" height="9.7" fill="#f0b06c"/>
<rect x="18.50" y="143.2" width="2.2" height="1.9" fill="#dcdcdc"/><rect x="18.50" y="146" width="2.2" height="9.7" fill="#f0b06c"/>
<rect x="8" y="161.8" width="6.3" height="1.2" fill="#b0b0b0"/>
<rect x="8.00" y="163.5" width="1.1" height="4.2" fill="#8a8a8a"/>
<rect x="9.65" y="163.5" width="1.1" height="4.2" fill="#8a8a8a"/>
<rect x="11.30" y="163.5" width="1.1" height="4.2" fill="#8a8a8a"/>
<rect x="12.95" y="163.5" width="1.1" height="4.2" fill="#8a8a8a"/>
<rect x="12.8" y="167.2" width="8.2" height="1.4" fill="#f0a8a0"/>
<rect x="12.80" y="169" width="1.3" height="4.8" fill="#e05a4e"/>
<rect x="14.50" y="169" width="1.3" height="4.8" fill="#e05a4e"/>
<rect x="16.20" y="169" width="1.3" height="4.8" fill="#e05a4e"/>
<rect x="17.90" y="169" width="1.3" height="4.8" fill="#e05a4e"/>
<rect x="19.60" y="169" width="1.3" height="4.8" fill="#e05a4e"/>
<path d="M15.8,161.6 H19.2 V164.6 M17.9,163.6 L19.2,165.2 L20.5,163.6" fill="none" stroke="#3f9ad6" stroke-width="0.7"/>
<rect x="9.6" y="180.2" width="10.9" height="11" rx="1.2" fill="#35b56a" stroke="#5fd08c" stroke-width="0.7" stroke-dasharray="1 0.8"/>
<path d="M10.5,198.2 H20.4 Q21.2,198.2 21,199.4 L20.2,200.2 H18.8 V206.2 H10.6 Z" fill="none" stroke="#e8872a" stroke-width="1.4"/><path d="M8.4,206.2 H19 V209.2 H9.6 Q8.2,209 8.4,206.2 Z" fill="#e8872a"/>
<path d="M101.8,73.6 H105.2 M103.5,71.9 V75.3" stroke="#3f9ad6" stroke-width="1.1"/>
<rect x="106.2" y="71.9" width="2.5" height="2.1" fill="#c8c8c8"/><rect x="106.2" y="74.9" width="2.5" height="9.6" fill="#f0b06c"/>
<rect x="109.5" y="71.9" width="2.5" height="2.1" fill="#c8c8c8"/><rect x="109.5" y="74.9" width="2.5" height="9.6" fill="#f0b06c"/>
<rect x="112.8" y="71.9" width="2.5" height="2.1" fill="#c8c8c8"/><rect x="112.8" y="74.9" width="2.5" height="9.6" fill="#f0b06c"/>
<rect x="102.5" y="89.2" width="2.5" height="2.1" fill="#c8c8c8"/><rect x="102.5" y="92.2" width="2.5" height="9.6" fill="#f0b06c"/><rect x="112.3" y="89.2" width="2.5" height="2.1" fill="#c8c8c8"/><rect x="112.3" y="92.2" width="2.5" height="9.6" fill="#f0b06c"/>
<path d="M105.6,96.6 L107.6,97.8 L105.6,99 Z M111.6,96.6 L109.6,97.8 L111.6,99 Z" fill="#3f9ad6"/>
<rect x="102.5" y="107.1" width="2.5" height="2.1" fill="#c8c8c8"/><rect x="102.5" y="110.1" width="2.5" height="9.6" fill="#f0b06c"/><rect x="110.8" y="107.1" width="2.5" height="2.1" fill="#c8c8c8"/><rect x="110.8" y="110.1" width="2.5" height="9.6" fill="#f0b06c"/>
<path d="M106,111 L108,112.2 L106,113.4 Z" fill="#3f9ad6"/>
<rect x="102.2" y="123.8" width="2.5" height="2.1" fill="#c8c8c8"/><rect x="102.2" y="126.8" width="2.5" height="9.6" fill="#f0b06c"/><rect x="105.6" y="123.8" width="2.5" height="2.1" fill="#c8c8c8"/><rect x="105.6" y="126.8" width="2.5" height="9.6" fill="#f0b06c"/>
<path d="M108.6,131.6 H110.8 M110.3,130.6 L111.3,131.6 L110.3,132.6" stroke="#3f9ad6" stroke-width="0.7" fill="none"/><path d="M112,130 H114.2 Q115,131.6 114.2,133.4 H112 Z" fill="none" stroke="#3f9ad6" stroke-width="0.6"/>
<rect x="102.5" y="141.1" width="2.5" height="2.1" fill="#c8c8c8"/><rect x="102.5" y="144.1" width="2.5" height="9.6" fill="#f0b06c"/><rect x="112.3" y="141.1" width="2.5" height="2.1" fill="#c8c8c8"/><rect x="112.3" y="144.1" width="2.5" height="9.6" fill="#f0b06c"/>
<path d="M106,147.2 H111 M109.8,146.2 L111,147.2 L109.8,148.2 M111,150 H106 M107.2,149 L106,150 L107.2,151" stroke="#3f9ad6" stroke-width="0.7" fill="none"/>
<rect x="102.5" y="158.0" width="2.5" height="2.1" fill="#c8c8c8"/><rect x="102.5" y="161.0" width="2.5" height="9.6" fill="#f0b06c"/><rect x="112.3" y="158.0" width="2.5" height="2.1" fill="#c8c8c8"/><rect x="112.3" y="161.0" width="2.5" height="9.6" fill="#f0b06c"/>
<path d="M107.8,165.4 L105.8,166.6 L107.8,167.8 Z M109.4,165.4 L111.4,166.6 L109.4,167.8 Z" fill="#3f9ad6"/>
<path d="M102.2,178.1 H106.4 M104.3,176 V180.2" stroke="#3f9ad6" stroke-width="1.2"/>
<rect x="106.6" y="177.3" width="8.6" height="2.1" fill="#f0b06c"/><rect x="103.4" y="179.6" width="11.8" height="8.6" fill="none" stroke="#9a8a78" stroke-width="0.6"/><path d="M103.4,182.4 H115 M103.4,185.2 H110 M106.3,179.6 V188 M109.2,179.6 V188 M112.1,179.6 V184" stroke="#9a8a78" stroke-width="0.5"/>
<circle cx="112.4" cy="185.6" r="2.7" fill="#545454" stroke="#7fb347" stroke-width="0.9"/><path d="M112.4,184.2 V185.7 H113.6" stroke="#7fb347" stroke-width="0.6" fill="none"/>
<rect x="102.5" y="194" width="12.6" height="2.9" fill="#f0b06c"/><rect x="108.2" y="194.8" width="6" height="1.3" fill="#545454"/>
<rect x="102.5" y="197.9" width="12.6" height="2.9" fill="#f0b06c"/><rect x="103.4" y="198.70000000000002" width="6" height="1.3" fill="#545454"/>
<rect x="102.5" y="201.8" width="12.6" height="2.9" fill="#f0b06c"/><rect x="108.2" y="202.60000000000002" width="6" height="1.3" fill="#545454"/>
<rect x="101.9" y="212.80" width="8.899999999999991" height="2.05" fill="#f0b06c"/><rect x="101.9" y="215.95" width="8.899999999999991" height="2.05" fill="#f0b06c"/><rect x="101.9" y="219.10" width="8.899999999999991" height="2.05" fill="#f0b06c"/><path d="M111.6,211 V222.7" stroke="#3f86b8" stroke-width="0.7"/><rect x="112.7" y="212.80" width="2.2" height="2" fill="#c8c8c8"/><rect x="112.7" y="215.95" width="2.2" height="2" fill="#c8c8c8"/><rect x="112.7" y="219.10" width="2.2" height="2" fill="#c8c8c8"/>
<rect x="106.2" y="229.90" width="8.700000000000003" height="2.05" fill="#f0b06c"/><rect x="106.2" y="233.05" width="8.700000000000003" height="2.05" fill="#f0b06c"/><rect x="106.2" y="236.20" width="8.700000000000003" height="2.05" fill="#f0b06c"/><path d="M105.4,228.2 V239.9" stroke="#3f86b8" stroke-width="0.7"/><rect x="101.9" y="229.90" width="2.2" height="2" fill="#c8c8c8"/><rect x="101.9" y="233.05" width="2.2" height="2" fill="#c8c8c8"/><rect x="101.9" y="236.20" width="2.2" height="2" fill="#c8c8c8"/>
<rect x="106" y="247.00" width="5.299999999999997" height="2.05" fill="#f0b06c"/><rect x="106" y="250.15" width="5.299999999999997" height="2.05" fill="#f0b06c"/><rect x="106" y="253.30" width="5.299999999999997" height="2.05" fill="#f0b06c"/><path d="M105.2,245 V257.8 M112.3,245 V257.8" stroke="#3f86b8" stroke-width="0.5" stroke-dasharray="1 0.8"/><rect x="102" y="247.00" width="2.2" height="2" fill="#c8c8c8"/><rect x="102" y="250.15" width="2.2" height="2" fill="#c8c8c8"/><rect x="102" y="253.30" width="2.2" height="2" fill="#c8c8c8"/><rect x="113" y="247.00" width="2.2" height="2" fill="#c8c8c8"/><rect x="113" y="250.15" width="2.2" height="2" fill="#c8c8c8"/><rect x="113" y="253.30" width="2.2" height="2" fill="#c8c8c8"/>
<rect x="105" y="264.10" width="7.299999999999997" height="2.05" fill="#f0b06c"/><rect x="105" y="267.25" width="7.299999999999997" height="2.05" fill="#f0b06c"/><rect x="105" y="270.40" width="7.299999999999997" height="2.05" fill="#f0b06c"/><rect x="102.2" y="264.10" width="2.2" height="2" fill="#8a8a8a"/><rect x="113" y="264.10" width="2.2" height="2" fill="#8a8a8a"/><rect x="102.2" y="267.25" width="2.2" height="2" fill="#8a8a8a"/><rect x="113" y="267.25" width="2.2" height="2" fill="#8a8a8a"/><rect x="102.2" y="270.40" width="2.2" height="2" fill="#8a8a8a"/><rect x="113" y="270.40" width="2.2" height="2" fill="#8a8a8a"/>
<path d="M112.8,283 V280.6 H104.4 L109.2,286 L104.2,291.4 H113 V289" fill="none" stroke="#f0b06c" stroke-width="0.9"/>
<path d="M103.1,314.6 V326.2 H114.8" fill="none" stroke="#f0b06c" stroke-width="1"/><path d="M103.4,315.2 Q113.4,315.4 113.6,324.4" fill="none" stroke="#f0b06c" stroke-width="0.7"/><path d="M112.4,323 L113.6,325 L114.8,323 Z" fill="#f0b06c"/>
<path d="M843.6,79.4 L846.2,82 L848.8,79.4 M843.2,132.2 L846,135 L848.8,132.2 M843.4,359.4 L846.2,362.2 L849,359.4" fill="none" stroke="#b8b8b8" stroke-width="0.7"/>
<path d="M853.7,129.7 H855.7 M854.7,128.7 V130.7" stroke="#3f9ad6" stroke-width="0.7"/>
<rect x="856.40" y="129" width="1.5" height="1.2" fill="#c8c8c8"/><rect x="856.40" y="130.8" width="1.5" height="6.6" fill="#f0b06c"/>
<rect x="858.80" y="129" width="1.5" height="1.2" fill="#c8c8c8"/><rect x="858.80" y="130.8" width="1.5" height="6.6" fill="#f0b06c"/>
<rect x="861.20" y="129" width="1.5" height="1.2" fill="#c8c8c8"/><rect x="861.20" y="130.8" width="1.5" height="6.6" fill="#f0b06c"/>
<rect x="855" y="355" width="1.6" height="1.2" fill="#c8c8c8"/><rect x="855" y="356.8" width="1.6" height="8.4" fill="#2bb5a0"/><path d="M859.6,355 V365.2 M861.6,355 V365.2" stroke="#8a8a8a" stroke-width="0.5" stroke-dasharray="0.8 0.8"/>
<path d="M1017,335.4 H1021 L1019,337.6 Z" fill="#6a6a6a"/>
<path d="M904.4,333 V339.8" stroke="#222" stroke-width="0.6"/>
</svg>
<span id="t0" style="left:57.00px;top:21.80px;font-size:6.5px;color:#727272;font-family:'Liberation Sans', sans-serif;letter-spacing:-0.361px;">Execution</span>
<span id="t1" style="left:58.80px;top:29.30px;font-size:6.5px;color:#727272;font-family:'Liberation Sans', sans-serif;letter-spacing:-0.331px;">Model ▾</span>
<span id="t2" style="left:91.30px;top:21.80px;font-size:6.5px;color:#ececec;font-family:'Liberation Sans', sans-serif;letter-spacing:-0.291px;">Clear All</span>
<span id="t3" style="left:122.10px;top:21.80px;font-size:6.5px;color:#ececec;font-family:'Liberation Sans', sans-serif;letter-spacing:-0.264px;">Validate</span>
<span id="t4" style="left:92.60px;top:39.60px;font-size:6px;color:#9a9a9a;font-family:'Liberation Sans', sans-serif;letter-spacing:-0.511px;">FLOW</span>
<span id="t5" style="left:161.50px;top:21.80px;font-size:6.5px;color:#ffffff;font-family:'Liberation Sans', sans-serif;letter-spacing:-0.144px;">Auto</span>
<span id="t6" style="left:157.70px;top:29.30px;font-size:6.5px;color:#ffffff;font-family:'Liberation Sans', sans-serif;letter-spacing:-0.418px;">Preview</span>
<span id="t7" style="left:186.60px;top:21.80px;font-size:6.5px;color:#d8d8d8;font-family:'Liberation Sans', sans-serif;letter-spacing:-0.469px;">Rearrange</span>
<span id="t8" style="left:221.60px;top:21.80px;font-size:6.5px;color:#d8d8d8;font-family:'Liberation Sans', sans-serif;letter-spacing:-0.363px;">Scale to</span>
<span id="t9" style="left:229.00px;top:29.30px;font-size:6.5px;color:#d8d8d8;font-family:'Liberation Sans', sans-serif;letter-spacing:-0.178px;">Fit</span>
<span id="t10" style="left:219.10px;top:39.60px;font-size:6px;color:#9a9a9a;font-family:'Liberation Sans', sans-serif;letter-spacing:-0.302px;">DIAGRAM</span>
<span id="t11" style="left:252.00px;top:21.80px;font-size:6.5px;color:#ffffff;font-family:'Liberation Sans', sans-serif;letter-spacing:-0.405px;">Execution</span>
<span id="t12" style="left:256.20px;top:29.30px;font-size:6.5px;color:#ffffff;font-family:'Liberation Sans', sans-serif;letter-spacing:-0.390px;">Status</span>
<span id="t13" style="left:288.80px;top:21.80px;font-size:6.5px;color:#bcbcbc;font-family:'Liberation Sans', sans-serif;letter-spacing:-0.383px;">Delete</span>
<span id="t14" style="left:4.60px;top:53.80px;font-size:6.5px;color:#ececec;font-family:'Liberation Sans', sans-serif;letter-spacing:-0.126px;">Elements</span>
<span id="t15" style="left:206.90px;top:54.00px;font-size:6.5px;color:#8a8a8a;font-family:'Liberation Sans', sans-serif;letter-spacing:-0.085px;">Data Flow</span>
<span id="t16" style="left:269.40px;top:53.80px;font-size:6.5px;color:#ececec;font-family:'Liberation Sans', sans-serif;letter-spacing:-0.015px;">Data Model</span>
<span id="t17" style="left:331.00px;top:53.80px;font-size:6.5px;color:#ececec;font-family:'Liberation Sans', sans-serif;letter-spacing:-0.086px;">Security</span>
<span id="t18" style="left:648.70px;top:53.50px;font-size:6.8px;color:#93a6b8;font-family:'Liberation Sans', sans-serif;letter-spacing:-0.573px;">100%</span>
<span id="t19" style="left:804.60px;top:53.30px;font-size:8px;color:#d4d4d4;font-family:'Liberation Sans', sans-serif;font-weight:bold;">?</span>
<span id="t20" style="left:835.60px;top:53.80px;font-size:6.5px;color:#ececec;font-family:'Liberation Sans', sans-serif;letter-spacing:0.037px;">Properties</span>
<span id="t21" style="left:26.50px;top:70.90px;font-size:6.5px;color:#ececec;font-family:'Liberation Sans', sans-serif;letter-spacing:-0.208px;">Sources</span>
<span id="t22" style="left:26.50px;top:89.55px;font-size:6.5px;color:#ececec;font-family:'Liberation Sans', sans-serif;letter-spacing:-0.118px;">Targets</span>
<span id="t23" style="left:26.50px;top:107.70px;font-size:6.5px;color:#ececec;font-family:'Liberation Sans', sans-serif;letter-spacing:-0.146px;">Select</span>
<span id="t24" style="left:26.50px;top:125.90px;font-size:6.5px;color:#ececec;font-family:'Liberation Sans', sans-serif;letter-spacing:-0.046px;">Preparation</span>
<span id="t25" style="left:26.50px;top:144.20px;font-size:6.5px;color:#ececec;font-family:'Liberation Sans', sans-serif;letter-spacing:-0.029px;">Column Operations</span>
<span id="t26" style="left:26.50px;top:162.30px;font-size:6.5px;color:#ececec;font-family:'Liberation Sans', sans-serif;letter-spacing:-0.109px;">Join</span>
<span id="t27" style="left:26.50px;top:180.70px;font-size:6.5px;color:#ececec;font-family:'Liberation Sans', sans-serif;letter-spacing:-0.062px;">Machine Learning</span>
<span id="t28" style="left:26.50px;top:198.90px;font-size:6.5px;color:#ececec;font-family:'Liberation Sans', sans-serif;letter-spacing:0.011px;">Scripting</span>
<span id="t29" style="left:120.60px;top:74.40px;font-size:6.5px;color:#ececec;font-family:'Liberation Sans', sans-serif;letter-spacing:-0.072px;">Calculated Column</span>
<span id="t30" style="left:120.60px;top:91.55px;font-size:6.5px;color:#ececec;font-family:'Liberation Sans', sans-serif;letter-spacing:-0.085px;">Combine Columns</span>
<span id="t31" style="left:120.60px;top:109.00px;font-size:6.5px;color:#ececec;font-family:'Liberation Sans', sans-serif;letter-spacing:-0.088px;">Convert Columns</span>
<span id="t32" style="left:120.60px;top:125.80px;font-size:6.5px;color:#ececec;font-family:'Liberation Sans', sans-serif;letter-spacing:-0.202px;">Rename Columns</span>
<span id="t33" style="left:120.60px;top:143.10px;font-size:6.5px;color:#ececec;font-family:'Liberation Sans', sans-serif;letter-spacing:-0.087px;">Reorder columns</span>
<span id="t34" style="left:120.60px;top:160.40px;font-size:6.5px;color:#ececec;font-family:'Liberation Sans', sans-serif;letter-spacing:-0.047px;">Split Columns</span>
<span id="t35" style="left:120.60px;top:178.00px;font-size:6.5px;color:#ececec;font-family:'Liberation Sans', sans-serif;letter-spacing:-0.005px;">Add Date Unit</span>
<span id="t36" style="left:120.60px;top:195.10px;font-size:6.5px;color:#ececec;font-family:'Liberation Sans', sans-serif;letter-spacing:-0.251px;">Replace</span>
<span id="t37" style="left:120.60px;top:212.50px;font-size:6.5px;color:#ececec;font-family:'Liberation Sans', sans-serif;letter-spacing:-0.040px;">String Left</span>
<span id="t38" style="left:120.60px;top:229.80px;font-size:6.5px;color:#ececec;font-family:'Liberation Sans', sans-serif;letter-spacing:-0.022px;">String Right</span>
<span id="t39" style="left:120.60px;top:246.90px;font-size:6.5px;color:#ececec;font-family:'Liberation Sans', sans-serif;letter-spacing:-0.052px;">Substring</span>
<span id="t40" style="left:120.60px;top:264.10px;font-size:6.5px;color:#ececec;font-family:'Liberation Sans', sans-serif;letter-spacing:-0.166px;">Trim</span>
<span id="t41" style="left:120.60px;top:281.90px;font-size:6.5px;color:#ececec;font-family:'Liberation Sans', sans-serif;letter-spacing:0.030px;">Aggregation Function</span>
<span id="t42" style="left:120.60px;top:299.00px;font-size:6.5px;color:#ececec;font-family:'Liberation Sans', sans-serif;letter-spacing:-0.004px;">Mathematical Function</span>
<span id="t43" style="left:120.60px;top:316.20px;font-size:6.5px;color:#ececec;font-family:'Liberation Sans', sans-serif;letter-spacing:-0.044px;">Trigonometric Functi...</span>
<span id="t44" style="left:192.00px;top:387.30px;font-size:6.5px;color:#d8d8d8;font-family:'Liberation Sans', sans-serif;letter-spacing:-0.046px;">Preview</span>
<span id="t45" style="left:203.50px;top:490.70px;font-size:6.5px;color:#ececec;font-family:'Liberation Sans', sans-serif;letter-spacing:-0.089px;">Progress</span>
<span id="t46" style="left:253.80px;top:490.70px;font-size:6.5px;color:#ececec;font-family:'Liberation Sans', sans-serif;letter-spacing:-0.034px;">Errors</span>
<span id="t47" style="left:187.60px;top:402.00px;font-size:6.5px;color:#ffffff;font-family:'Liberation Sans', sans-serif;font-weight:bold;letter-spacing:-0.333px;clip-path:inset(0 0 0 0.5px);">nfKey</span>
<span id="t48" style="left:231.80px;top:402.00px;font-size:6.5px;color:#ffffff;font-family:'Liberation Sans', sans-serif;font-weight:bold;letter-spacing:-0.047px;">Quantity</span>
<span id="t49" style="left:285.90px;top:402.00px;font-size:6.5px;color:#ffffff;font-family:'Liberation Sans', sans-serif;font-weight:bold;letter-spacing:-0.281px;">Price</span>
<span id="t50" style="left:340.10px;top:402.00px;font-size:6.5px;color:#ffffff;font-family:'Liberation Sans', sans-serif;font-weight:bold;letter-spacing:0.031px;">Margin</span>
<span id="t51" style="left:394.30px;top:402.00px;font-size:6.5px;color:#ffffff;font-family:'Liberation Sans', sans-serif;font-weight:bold;letter-spacing:-0.488px;">Cost</span>
<span id="t52" style="left:448.50px;top:402.00px;font-size:6.5px;color:#ffffff;font-family:'Liberation Sans', sans-serif;font-weight:bold;letter-spacing:-0.152px;">OverHead</span>
<span id="t53" style="left:502.60px;top:402.00px;font-size:6.5px;color:#ffffff;font-family:'Liberation Sans', sans-serif;font-weight:bold;letter-spacing:-0.201px;">returns</span>
<span id="t54" style="left:556.80px;top:402.00px;font-size:6.5px;color:#ffffff;font-family:'Liberation Sans', sans-serif;font-weight:bold;letter-spacing:-0.400px;">Sales</span>
<span id="t55" style="left:610.90px;top:402.00px;font-size:6.5px;color:#ffffff;font-family:'Liberation Sans', sans-serif;font-weight:bold;letter-spacing:-0.420px;">Expenses</span>
<span id="t56" style="left:665.10px;top:402.00px;font-size:6.5px;color:#ffffff;font-family:'Liberation Sans', sans-serif;font-weight:bold;letter-spacing:-0.067px;">net profit</span>
<span id="t57" style="left:719.20px;top:402.00px;font-size:6.5px;color:#ffffff;font-family:'Liberation Sans', sans-serif;font-weight:bold;letter-spacing:-0.073px;">net margin</span>
<span id="t58" style="left:772.80px;top:402.20px;font-size:6.5px;color:#ffffff;font-family:'Liberation Sans', sans-serif;font-weight:bold;letter-spacing:-0.019px;">Margin</span>
<span id="t59" style="left:772.80px;top:411.00px;font-size:6.5px;color:#ffffff;font-family:'Liberation Sans', sans-serif;font-weight:bold;letter-spacing:-0.151px;">Description</span>
<span id="t60" style="left:231.80px;top:423.90px;font-size:6.5px;color:#d6d6d6;font-family:'Liberation Sans', sans-serif;letter-spacing:-0.075px;">1</span>
<span id="t61" style="left:285.90px;top:423.90px;font-size:6.5px;color:#d6d6d6;font-family:'Liberation Sans', sans-serif;letter-spacing:-0.067px;">1315</span>
<span id="t62" style="left:340.10px;top:423.90px;font-size:6.5px;color:#d6d6d6;font-family:'Liberation Sans', sans-serif;letter-spacing:-0.116px;">0.3</span>
<span id="t63" style="left:394.30px;top:423.90px;font-size:6.5px;color:#d6d6d6;font-family:'Liberation Sans', sans-serif;letter-spacing:-0.096px;">920.5</span>
<span id="t64" style="left:448.50px;top:423.90px;font-size:6.5px;color:#d6d6d6;font-family:'Liberation Sans', sans-serif;letter-spacing:-0.009px;">118.35</span>
<span id="t65" style="left:502.60px;top:423.90px;font-size:6.5px;color:#d6d6d6;font-family:'Liberation Sans', sans-serif;letter-spacing:-0.531px;">NULL</span>
<span id="t66" style="left:556.80px;top:423.90px;font-size:6.5px;color:#d6d6d6;font-family:'Liberation Sans', sans-serif;letter-spacing:-0.067px;">1315</span>
<span id="t67" style="left:610.90px;top:423.90px;font-size:6.5px;color:#d6d6d6;font-family:'Liberation Sans', sans-serif;letter-spacing:-0.096px;">920.5</span>
<span id="t68" style="left:665.10px;top:423.90px;font-size:6.5px;color:#d6d6d6;font-family:'Liberation Sans', sans-serif;letter-spacing:-0.090px;">276.15</span>
<span id="t69" style="left:719.20px;top:423.90px;font-size:6.5px;color:#d6d6d6;font-family:'Liberation Sans', sans-serif;letter-spacing:-0.102px;">0.21</span>
<span id="t70" style="left:772.80px;top:423.90px;font-size:6.5px;color:#d6d6d6;font-family:'Liberation Sans', sans-serif;letter-spacing:0.019px;">Low Margin</span>
<span id="t71" style="left:231.80px;top:437.90px;font-size:6.5px;color:#d6d6d6;font-family:'Liberation Sans', sans-serif;letter-spacing:-0.075px;">1</span>
<span id="t72" style="left:285.90px;top:437.90px;font-size:6.5px;color:#d6d6d6;font-family:'Liberation Sans', sans-serif;letter-spacing:-0.067px;">1315</span>
<span id="t73" style="left:340.10px;top:437.90px;font-size:6.5px;color:#d6d6d6;font-family:'Liberation Sans', sans-serif;letter-spacing:-0.116px;">0.3</span>
<span id="t74" style="left:394.30px;top:437.90px;font-size:6.5px;color:#d6d6d6;font-family:'Liberation Sans', sans-serif;letter-spacing:-0.096px;">920.5</span>
<span id="t75" style="left:448.50px;top:437.90px;font-size:6.5px;color:#d6d6d6;font-family:'Liberation Sans', sans-serif;letter-spacing:-0.009px;">118.35</span>
<span id="t76" style="left:502.60px;top:437.90px;font-size:6.5px;color:#d6d6d6;font-family:'Liberation Sans', sans-serif;letter-spacing:-0.531px;">NULL</span>
<span id="t77" style="left:556.80px;top:437.90px;font-size:6.5px;color:#d6d6d6;font-family:'Liberation Sans', sans-serif;letter-spacing:-0.067px;">1315</span>
<span id="t78" style="left:610.90px;top:437.90px;font-size:6.5px;color:#d6d6d6;font-family:'Liberation Sans', sans-serif;letter-spacing:-0.096px;">920.5</span>
<span id="t79" style="left:665.10px;top:437.90px;font-size:6.5px;color:#d6d6d6;font-family:'Liberation Sans', sans-serif;letter-spacing:-0.090px;">276.15</span>
<span id="t80" style="left:719.20px;top:437.90px;font-size:6.5px;color:#d6d6d6;font-family:'Liberation Sans', sans-serif;letter-spacing:-0.102px;">0.21</span>
<span id="t81" style="left:772.80px;top:437.90px;font-size:6.5px;color:#d6d6d6;font-family:'Liberation Sans', sans-serif;letter-spacing:0.019px;">Low Margin</span>
<span id="t82" style="left:231.80px;top:451.90px;font-size:6.5px;color:#d6d6d6;font-family:'Liberation Sans', sans-serif;letter-spacing:-0.075px;">1</span>
<span id="t83" style="left:285.90px;top:451.90px;font-size:6.5px;color:#d6d6d6;font-family:'Liberation Sans', sans-serif;letter-spacing:-0.067px;">29</span>
<span id="t84" style="left:340.10px;top:451.90px;font-size:6.5px;color:#d6d6d6;font-family:'Liberation Sans', sans-serif;letter-spacing:-0.102px;">0.37</span>
<span id="t85" style="left:394.30px;top:451.90px;font-size:6.5px;color:#d6d6d6;font-family:'Liberation Sans', sans-serif;letter-spacing:-0.096px;">18.27</span>
<span id="t86" style="left:448.50px;top:451.90px;font-size:6.5px;color:#d6d6d6;font-family:'Liberation Sans', sans-serif;letter-spacing:-0.096px;">3.219</span>
<span id="t87" style="left:502.60px;top:451.90px;font-size:6.5px;color:#d6d6d6;font-family:'Liberation Sans', sans-serif;letter-spacing:-0.531px;">NULL</span>
<span id="t88" style="left:556.80px;top:451.90px;font-size:6.5px;color:#d6d6d6;font-family:'Liberation Sans', sans-serif;letter-spacing:-0.067px;">29</span>
<span id="t89" style="left:610.90px;top:451.90px;font-size:6.5px;color:#d6d6d6;font-family:'Liberation Sans', sans-serif;letter-spacing:-0.096px;">18.27</span>
<span id="t90" style="left:665.10px;top:451.90px;font-size:6.5px;color:#d6d6d6;font-family:'Liberation Sans', sans-serif;letter-spacing:-0.234px;">7.5110000000...</span>
<span id="t91" style="left:719.20px;top:451.90px;font-size:6.5px;color:#d6d6d6;font-family:'Liberation Sans', sans-serif;letter-spacing:-0.096px;">0.259</span>
<span id="t92" style="left:772.80px;top:451.90px;font-size:6.5px;color:#d6d6d6;font-family:'Liberation Sans', sans-serif;letter-spacing:0.041px;">High Margin</span>
<span id="t93" style="left:231.80px;top:465.90px;font-size:6.5px;color:#d6d6d6;font-family:'Liberation Sans', sans-serif;letter-spacing:-0.075px;">1</span>
<span id="t94" style="left:285.90px;top:465.90px;font-size:6.5px;color:#d6d6d6;font-family:'Liberation Sans', sans-serif;letter-spacing:-0.090px;">327.24</span>
<span id="t95" style="left:340.10px;top:465.90px;font-size:6.5px;color:#d6d6d6;font-family:'Liberation Sans', sans-serif;letter-spacing:-0.102px;">0.27</span>
<span id="t96" style="left:394.30px;top:465.90px;font-size:6.5px;color:#d6d6d6;font-family:'Liberation Sans', sans-serif;letter-spacing:-0.084px;">238.8852</span>
<span id="t97" style="left:448.50px;top:465.90px;font-size:6.5px;color:#d6d6d6;font-family:'Liberation Sans', sans-serif;letter-spacing:-0.084px;">17.67096</span>
<span id="t98" style="left:502.60px;top:465.90px;font-size:6.5px;color:#d6d6d6;font-family:'Liberation Sans', sans-serif;letter-spacing:-0.531px;">NULL</span>
<span id="t99" style="left:556.80px;top:465.90px;font-size:6.5px;color:#d6d6d6;font-family:'Liberation Sans', sans-serif;letter-spacing:-0.090px;">327.24</span>
<span id="t100" style="left:610.90px;top:465.90px;font-size:6.5px;color:#d6d6d6;font-family:'Liberation Sans', sans-serif;letter-spacing:-0.084px;">238.8852</span>
<span id="t101" style="left:665.10px;top:465.90px;font-size:6.5px;color:#d6d6d6;font-family:'Liberation Sans', sans-serif;letter-spacing:-0.084px;">70.68384</span>
<span id="t102" style="left:719.20px;top:465.90px;font-size:6.5px;color:#d6d6d6;font-family:'Liberation Sans', sans-serif;letter-spacing:-0.096px;">0.216</span>
<span id="t103" style="left:772.80px;top:465.90px;font-size:6.5px;color:#d6d6d6;font-family:'Liberation Sans', sans-serif;letter-spacing:0.019px;">Low Margin</span>
<span id="t104" style="left:185.60px;top:423.90px;font-size:6.5px;color:#d6d6d6;font-family:'Liberation Sans', sans-serif;clip-path:inset(0 0 0 2.4px);">5</span>
<span id="t105" style="left:185.60px;top:437.90px;font-size:6.5px;color:#d6d6d6;font-family:'Liberation Sans', sans-serif;clip-path:inset(0 0 0 2.4px);">5</span>
<span id="t106" style="left:185.60px;top:451.90px;font-size:6.5px;color:#d6d6d6;font-family:'Liberation Sans', sans-serif;clip-path:inset(0 0 0 2.4px);">0</span>
<span id="t107" style="left:185.60px;top:465.90px;font-size:6.5px;color:#d6d6d6;font-family:'Liberation Sans', sans-serif;clip-path:inset(0 0 0 2.4px);">8</span>
<span id="t108" style="left:853.50px;top:75.80px;font-size:6.5px;color:#ffffff;font-family:'Liberation Sans', sans-serif;font-weight:bold;letter-spacing:-0.237px;">Result Properties</span>
<span id="t109" style="left:843.80px;top:87.30px;font-size:6.5px;color:#a3abb3;font-family:'Liberation Sans', sans-serif;letter-spacing:-0.114px;">Resulting Table Name</span>
<span id="t110" style="left:849.00px;top:104.70px;font-size:6.5px;color:#333333;font-family:'Liberation Sans', sans-serif;letter-spacing:-0.289px;">data</span>
<span id="t111" style="left:867.70px;top:129.10px;font-size:6.5px;color:#ffffff;font-family:'Liberation Sans', sans-serif;font-weight:bold;letter-spacing:-0.240px;">Calculated Column</span>
<span id="t112" style="left:843.60px;top:140.60px;font-size:6.5px;color:#a3abb3;font-family:'Liberation Sans', sans-serif;letter-spacing:-0.038px;">Script</span>
<span id="t113" style="left:846.80px;top:315.30px;font-size:6.5px;color:#d8d8d8;font-family:'Liberation Sans', sans-serif;font-weight:bold;letter-spacing:0.108px;">Calculate Column Name</span>
<span id="t114" style="left:937.50px;top:315.30px;font-size:6.5px;color:#d8d8d8;font-family:'Liberation Sans', sans-serif;font-weight:bold;letter-spacing:0.028px;">Calculate Column Type</span>
<span id="t115" style="left:849.70px;top:331.60px;font-size:6.5px;color:#333333;font-family:'Liberation Sans', sans-serif;letter-spacing:-0.027px;">Margin Description</span>
<span id="t116" style="left:940.30px;top:331.60px;font-size:6.5px;color:#333333;font-family:'Liberation Sans', sans-serif;letter-spacing:-0.131px;">String</span>
<span id="t117" style="left:867.60px;top:356.00px;font-size:6.5px;color:#ffffff;font-family:'Liberation Sans', sans-serif;font-weight:bold;letter-spacing:-0.219px;">Column Selection</span>
<span id="t118" style="left:855.20px;top:155.70px;font-size:6.3px;color:#5f7080;font-family:'Liberation Mono', monospace;letter-spacing:-0.581px;">1</span>
<span id="t119" style="left:861.40px;top:155.70px;font-size:6.3px;color:#bcd68c;font-family:'Liberation Mono', monospace;letter-spacing:-0.210px;">IF</span>
<span id="t120" style="left:868.54px;top:155.70px;font-size:6.3px;color:#f0f0f0;font-family:'Liberation Mono', monospace;letter-spacing:-0.210px;">([</span>
<span id="t121" style="left:875.68px;top:155.70px;font-size:6.3px;color:#a4d4a4;font-family:'Liberation Mono', monospace;letter-spacing:-0.210px;">Margin</span>
<span id="t122" style="left:897.11px;top:155.70px;font-size:6.3px;color:#f0f0f0;font-family:'Liberation Mono', monospace;letter-spacing:-0.210px;">] &gt; </span>
<span id="t123" style="left:911.39px;top:155.70px;font-size:6.3px;color:#bb8fe0;font-family:'Liberation Mono', monospace;letter-spacing:-0.210px;">0.3</span>
<span id="t124" style="left:922.11px;top:155.70px;font-size:6.3px;color:#f0f0f0;font-family:'Liberation Mono', monospace;letter-spacing:-0.210px;">, </span>
<span id="t125" style="left:929.25px;top:155.70px;font-size:6.3px;color:#bcd68c;font-family:'Liberation Mono', monospace;letter-spacing:-0.210px;">IF</span>
<span id="t126" style="left:936.39px;top:155.70px;font-size:6.3px;color:#f0f0f0;font-family:'Liberation Mono', monospace;letter-spacing:-0.210px;">(</span>
<span id="t127" style="left:939.96px;top:155.70px;font-size:6.3px;color:#bcd68c;font-family:'Liberation Mono', monospace;letter-spacing:-0.210px;">floor</span>
<span id="t128" style="left:957.82px;top:155.70px;font-size:6.3px;color:#f0f0f0;font-family:'Liberation Mono', monospace;letter-spacing:-0.210px;">([</span>
<span id="t129" style="left:964.96px;top:155.70px;font-size:6.3px;color:#a4d4a4;font-family:'Liberation Mono', monospace;letter-spacing:-0.208px;">OverHead</span>
<span id="t130" style="left:993.53px;top:155.70px;font-size:6.3px;color:#f0f0f0;font-family:'Liberation Mono', monospace;letter-spacing:-0.210px;">]) &gt;</span>
<span id="t131" style="left:861.40px;top:163.30px;font-size:6.3px;color:#bb8fe0;font-family:'Liberation Mono', monospace;letter-spacing:-0.210px;">100</span>
<span id="t132" style="left:872.11px;top:163.30px;font-size:6.3px;color:#f0f0f0;font-family:'Liberation Mono', monospace;letter-spacing:-0.210px;">,</span>
<span id="t133" style="left:875.68px;top:163.30px;font-size:6.3px;color:#e2a26e;font-family:'Liberation Mono', monospace;letter-spacing:-0.208px;">"High Margin with OverHead"</span>
<span id="t134" style="left:972.10px;top:163.30px;font-size:6.3px;color:#f0f0f0;font-family:'Liberation Mono', monospace;letter-spacing:-0.210px;">, </span>
<span id="t135" style="left:979.24px;top:163.30px;font-size:6.3px;color:#e2a26e;font-family:'Liberation Mono', monospace;letter-spacing:-0.210px;">"High</span>
<span id="t136" style="left:861.40px;top:170.70px;font-size:6.3px;color:#e2a26e;font-family:'Liberation Mono', monospace;letter-spacing:-0.208px;">Margin"</span>
<span id="t137" style="left:886.40px;top:170.70px;font-size:6.3px;color:#f0f0f0;font-family:'Liberation Mono', monospace;letter-spacing:-0.210px;">), </span>
<span id="t138" style="left:897.11px;top:170.70px;font-size:6.3px;color:#e2a26e;font-family:'Liberation Mono', monospace;letter-spacing:-0.209px;">"Low Margin"</span>
<span id="t139" style="left:939.96px;top:170.70px;font-size:6.3px;color:#f0f0f0;font-family:'Liberation Mono', monospace;letter-spacing:-0.210px;">)</span>
<span id="t140" style="left:261.30px;top:141.10px;font-size:7px;color:#606060;font-family:'Liberation Sans', sans-serif;letter-spacing:-0.625px;">Excel</span>
<span id="t141" style="left:261.30px;top:148.10px;font-size:5.6px;color:#3a78b5;font-family:'Liberation Sans', sans-serif;letter-spacing:-0.233px;">SpreadSheetDemo I...</span>
<span id="t142" style="left:369.40px;top:140.95px;font-size:7px;color:#626262;font-family:'Liberation Sans', sans-serif;letter-spacing:-0.545px;">Select</span>
<span id="t143" style="left:369.40px;top:147.85px;font-size:5.6px;color:#3a78b5;font-family:'Liberation Sans', sans-serif;letter-spacing:-0.180px;">customerProfile...</span>
<span id="t144" style="left:369.40px;top:173.30px;font-size:7px;color:#626262;font-family:'Liberation Sans', sans-serif;letter-spacing:-0.545px;">Select</span>
<span id="t145" style="left:369.40px;top:180.20px;font-size:5.6px;color:#3a78b5;font-family:'Liberation Sans', sans-serif;letter-spacing:-0.235px;">customers</span>
<span id="t146" style="left:369.40px;top:205.70px;font-size:7px;color:#626262;font-family:'Liberation Sans', sans-serif;letter-spacing:-0.545px;">Select</span>
<span id="t147" style="left:369.40px;top:212.60px;font-size:5.6px;color:#3a78b5;font-family:'Liberation Sans', sans-serif;letter-spacing:-0.148px;">data</span>
<span id="t148" style="left:369.40px;top:238.30px;font-size:7px;color:#626262;font-family:'Liberation Sans', sans-serif;letter-spacing:-0.545px;">Select</span>
<span id="t149" style="left:369.40px;top:245.20px;font-size:5.6px;color:#3a78b5;font-family:'Liberation Sans', sans-serif;letter-spacing:-0.071px;">geography</span>
<span id="t150" style="left:369.40px;top:276.00px;font-size:7px;color:#626262;font-family:'Liberation Sans', sans-serif;letter-spacing:-0.545px;">Select</span>
<span id="t151" style="left:369.40px;top:282.90px;font-size:5.6px;color:#3a78b5;font-family:'Liberation Sans', sans-serif;letter-spacing:-0.143px;">manufacturer deta...</span>
<span id="t152" style="left:369.40px;top:308.20px;font-size:7px;color:#626262;font-family:'Liberation Sans', sans-serif;letter-spacing:-0.545px;">Select</span>
<span id="t153" style="left:369.40px;top:315.10px;font-size:5.6px;color:#3a78b5;font-family:'Liberation Sans', sans-serif;letter-spacing:-0.128px;">manufacturers</span>
<span id="t154" style="left:369.40px;top:340.20px;font-size:7px;color:#626262;font-family:'Liberation Sans', sans-serif;letter-spacing:-0.545px;">Select</span>
<span id="t155" style="left:369.40px;top:347.10px;font-size:5.6px;color:#3a78b5;font-family:'Liberation Sans', sans-serif;letter-spacing:-0.109px;">products</span>
<span id="t156" style="left:369.40px;top:372.30px;font-size:7px;color:#626262;font-family:'Liberation Sans', sans-serif;letter-spacing:-0.545px;">Select</span>
<span id="t157" style="left:515.25px;top:205.70px;font-size:7px;color:#5a5a5a;font-family:'Liberation Sans', sans-serif;letter-spacing:-0.352px;">Calculated Column.</span>
<span id="t158" style="left:515.25px;top:212.30px;font-size:5.6px;color:#3a78b5;font-family:'Liberation Sans', sans-serif;letter-spacing:-0.110px;">data</span>
<span id="t159" style="left:11.90px;top:181.00px;font-size:5.6px;color:#ffffff;font-family:'Liberation Sans', sans-serif;font-weight:bold;letter-spacing:0.303px;">AI</span>
<span id="t160" style="left:104.30px;top:112.30px;font-size:5.2px;color:#f0f0f0;font-family:'Liberation Sans', sans-serif;font-weight:bold;">A</span>
<span id="t161" style="left:113.50px;top:112.30px;font-size:5.6px;color:#f0f0f0;font-family:'Liberation Sans', sans-serif;font-weight:bold;">1</span>
<span id="t162" style="left:102.60px;top:297.90px;font-size:11px;color:#f0b06c;font-family:'Liberation Serif', serif;font-style:italic;letter-spacing:1.500px;">fx</span>
<span id="t163" style="left:104.30px;top:317.90px;font-size:4.4px;color:#d8d8d8;font-family:'Liberation Sans', sans-serif;">α</span>
</div></body></html>
